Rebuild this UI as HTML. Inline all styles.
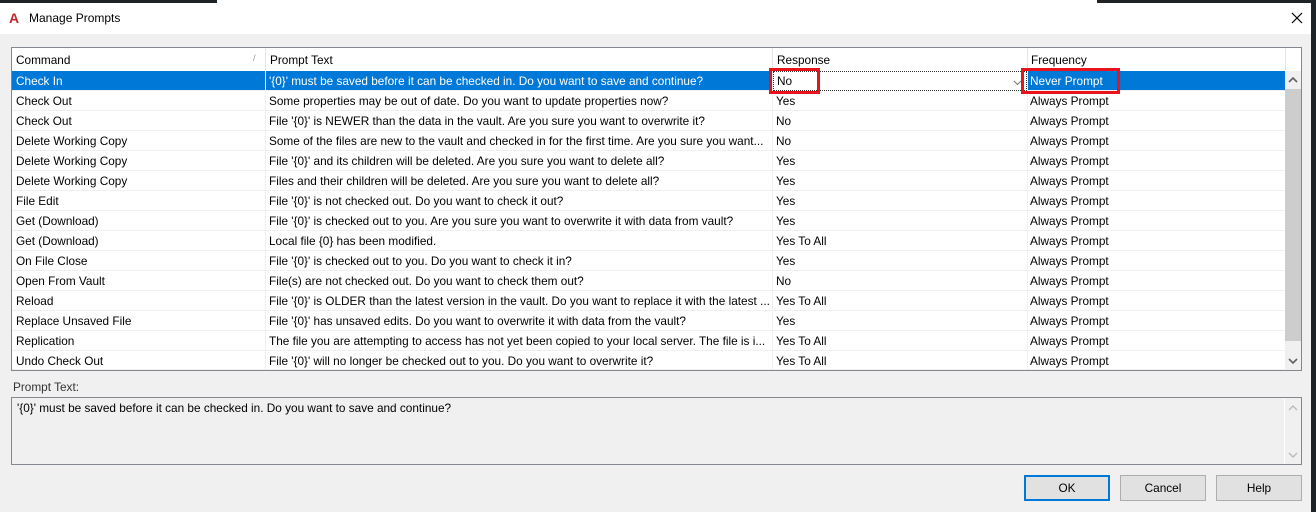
<!DOCTYPE html><html><head><style>
*{margin:0;padding:0;box-sizing:border-box}
body{width:1316px;height:512px;background:#f0f0f0;font-family:"Liberation Sans",sans-serif;font-size:11.8px;color:#000;position:relative;overflow:hidden}
.a{position:absolute}
.row{position:absolute;left:12px;width:1273px;height:20px;border-bottom:1px solid #f0f0f0;background:#fff}
.row span{position:absolute;top:3px;white-space:nowrap;overflow:hidden}
.c1{left:4px;width:248px}.c2{left:257px;width:500px}.c3{left:764px;width:240px}.c4{left:1018px}
.sel{background:#0078d7;color:#fff}
.btn{position:absolute;top:475px;width:86px;height:26px;background:#e1e1e1;border:1px solid #adadad;text-align:center;line-height:24px}
</style></head><body>
<div class="a" style="left:0;top:0;width:1316px;height:3px;background:#1e2328"></div>
<div class="a" style="left:217px;top:0;width:880px;height:3px;background:#fff"></div>
<div class="a" style="left:0;top:3px;width:1311px;height:31px;background:#fff"></div>
<div class="a" style="left:1311px;top:0;width:5px;height:512px;background:#1e2328"></div>
<div class="a" style="left:9px;top:10px;color:#c4262e;font-weight:bold;font-size:14px">A</div>
<div class="a" style="left:29px;top:11px;font-size:12px">Manage Prompts</div>
<svg class="a" style="left:1291px;top:12px" width="12" height="12"><path d="M1 1L11 11M11 1L1 11" stroke="#000" stroke-width="1.2"/></svg>
<div class="a" style="left:11px;top:47px;width:1291px;height:324px;border:1px solid #828790;background:#fff"></div>
<div class="a" style="left:16px;top:53px">Command</div><div class="a" style="left:253px;top:53px;color:#999;font-size:9px">/</div>
<div class="a" style="left:265px;top:48px;width:1px;height:22px;background:#e5e5e5"></div>
<div class="a" style="left:270px;top:53px">Prompt Text</div>
<div class="a" style="left:772px;top:48px;width:1px;height:22px;background:#e5e5e5"></div>
<div class="a" style="left:777px;top:53px">Response</div>
<div class="a" style="left:1027px;top:48px;width:1px;height:22px;background:#e5e5e5"></div>
<div class="a" style="left:1031px;top:53px">Frequency</div>
<div class="a" style="left:1285px;top:48px;width:1px;height:322px;background:#e5e5e5"></div>
<div class="row sel" style="top:71px"><span class="c1">Check In</span><span class="c2">'{0}' must be saved before it can be checked in. Do you want to save and continue?</span><span class="c4">Never Prompt</span>
<div style="position:absolute;left:761px;top:0;width:254px;height:20px;background:#fff;border:1px dotted #333;color:#000"><span style="left:3px;top:2px">No</span><svg style="position:absolute;left:239px;top:8px" width="9" height="6"><path d="M1 1L4.5 4.5L8 1" stroke="#777" fill="none"/></svg></div></div>
<div class="row" style="top:91px"><span class="c1">Check Out</span><span class="c2">Some properties may be out of date. Do you want to update properties now?</span><span class="c3">Yes</span><span class="c4">Always Prompt</span></div>
<div class="row" style="top:111px"><span class="c1">Check Out</span><span class="c2">File '{0}' is NEWER than the data in the vault. Are you sure you want to overwrite it?</span><span class="c3">No</span><span class="c4">Always Prompt</span></div>
<div class="row" style="top:131px"><span class="c1">Delete Working Copy</span><span class="c2">Some of the files are new to the vault and checked in for the first time. Are you sure you want...</span><span class="c3">No</span><span class="c4">Always Prompt</span></div>
<div class="row" style="top:151px"><span class="c1">Delete Working Copy</span><span class="c2">File '{0}' and its children will be deleted. Are you sure you want to delete all?</span><span class="c3">Yes</span><span class="c4">Always Prompt</span></div>
<div class="row" style="top:171px"><span class="c1">Delete Working Copy</span><span class="c2">Files and their children will be deleted. Are you sure you want to delete all?</span><span class="c3">Yes</span><span class="c4">Always Prompt</span></div>
<div class="row" style="top:191px"><span class="c1">File Edit</span><span class="c2">File '{0}' is not checked out. Do you want to check it out?</span><span class="c3">Yes</span><span class="c4">Always Prompt</span></div>
<div class="row" style="top:211px"><span class="c1">Get (Download)</span><span class="c2">File '{0}' is checked out to you. Are you sure you want to overwrite it with data from vault?</span><span class="c3">Yes</span><span class="c4">Always Prompt</span></div>
<div class="row" style="top:231px"><span class="c1">Get (Download)</span><span class="c2">Local file {0} has been modified.</span><span class="c3">Yes To All</span><span class="c4">Always Prompt</span></div>
<div class="row" style="top:251px"><span class="c1">On File Close</span><span class="c2">File '{0}' is checked out to you. Do you want to check it in?</span><span class="c3">Yes</span><span class="c4">Always Prompt</span></div>
<div class="row" style="top:271px"><span class="c1">Open From Vault</span><span class="c2">File(s) are not checked out. Do you want to check them out?</span><span class="c3">No</span><span class="c4">Always Prompt</span></div>
<div class="row" style="top:291px"><span class="c1">Reload</span><span class="c2">File '{0}' is OLDER than the latest version in the vault. Do you want to replace it with the latest ...</span><span class="c3">Yes To All</span><span class="c4">Always Prompt</span></div>
<div class="row" style="top:311px"><span class="c1">Replace Unsaved File</span><span class="c2">File '{0}' has unsaved edits. Do you want to overwrite it with data from the vault?</span><span class="c3">Yes</span><span class="c4">Always Prompt</span></div>
<div class="row" style="top:331px"><span class="c1">Replication</span><span class="c2">The file you are attempting to access has not yet been copied to your local server. The file is i...</span><span class="c3">Yes To All</span><span class="c4">Always Prompt</span></div>
<div class="row" style="top:351px;height:19px"><span class="c1">Undo Check Out</span><span class="c2">File '{0}' will no longer be checked out to you. Do you want to overwrite it?</span><span class="c3">Yes To All</span><span class="c4">Always Prompt</span></div>
<div class="a" style="left:265px;top:71px;width:1px;height:299px;background:#f0f0f0"></div>
<div class="a" style="left:772px;top:71px;width:1px;height:299px;background:#f0f0f0"></div>
<div class="a" style="left:1027px;top:71px;width:1px;height:299px;background:#f0f0f0"></div>
<div class="a" style="left:1285px;top:71px;width:16px;height:299px;background:#f0f0f0"></div>
<div class="a" style="left:1285px;top:89px;width:16px;height:252px;background:#cdcdcd"></div>
<svg class="a" style="left:1288px;top:76px" width="10" height="8"><path d="M1 6L5 2L9 6" stroke="#606060" stroke-width="1.6" fill="none"/></svg>
<svg class="a" style="left:1288px;top:357px" width="10" height="8"><path d="M1 2L5 6L9 2" stroke="#606060" stroke-width="1.6" fill="none"/></svg>
<div class="a" style="left:769px;top:68px;width:51px;height:26px;border:3px solid #e8141b"></div>
<div class="a" style="left:1021px;top:68px;width:99px;height:26px;border:3px solid #e8141b"></div>
<div class="a" style="left:13px;top:380px;color:#333">Prompt Text:</div>
<div class="a" style="left:11px;top:397px;width:1291px;height:68px;border:1px solid #828790;background:#f0f0f0"></div>
<div class="a" style="left:1284px;top:398px;width:1px;height:66px;background:#fff"></div>
<div class="a" style="left:17px;top:401px">'{0}' must be saved before it can be checked in. Do you want to save and continue?</div>
<svg class="a" style="left:1288px;top:404px" width="10" height="8"><path d="M1 6L5 2L9 6" stroke="#bbb" stroke-width="1.4" fill="none"/></svg>
<svg class="a" style="left:1288px;top:451px" width="10" height="8"><path d="M1 2L5 6L9 2" stroke="#bbb" stroke-width="1.4" fill="none"/></svg>
<div class="btn" style="left:1024px;border:2px solid #0078d7;line-height:22px">OK</div>
<div class="btn" style="left:1120px">Cancel</div>
<div class="btn" style="left:1216px">Help</div>
</body></html>
